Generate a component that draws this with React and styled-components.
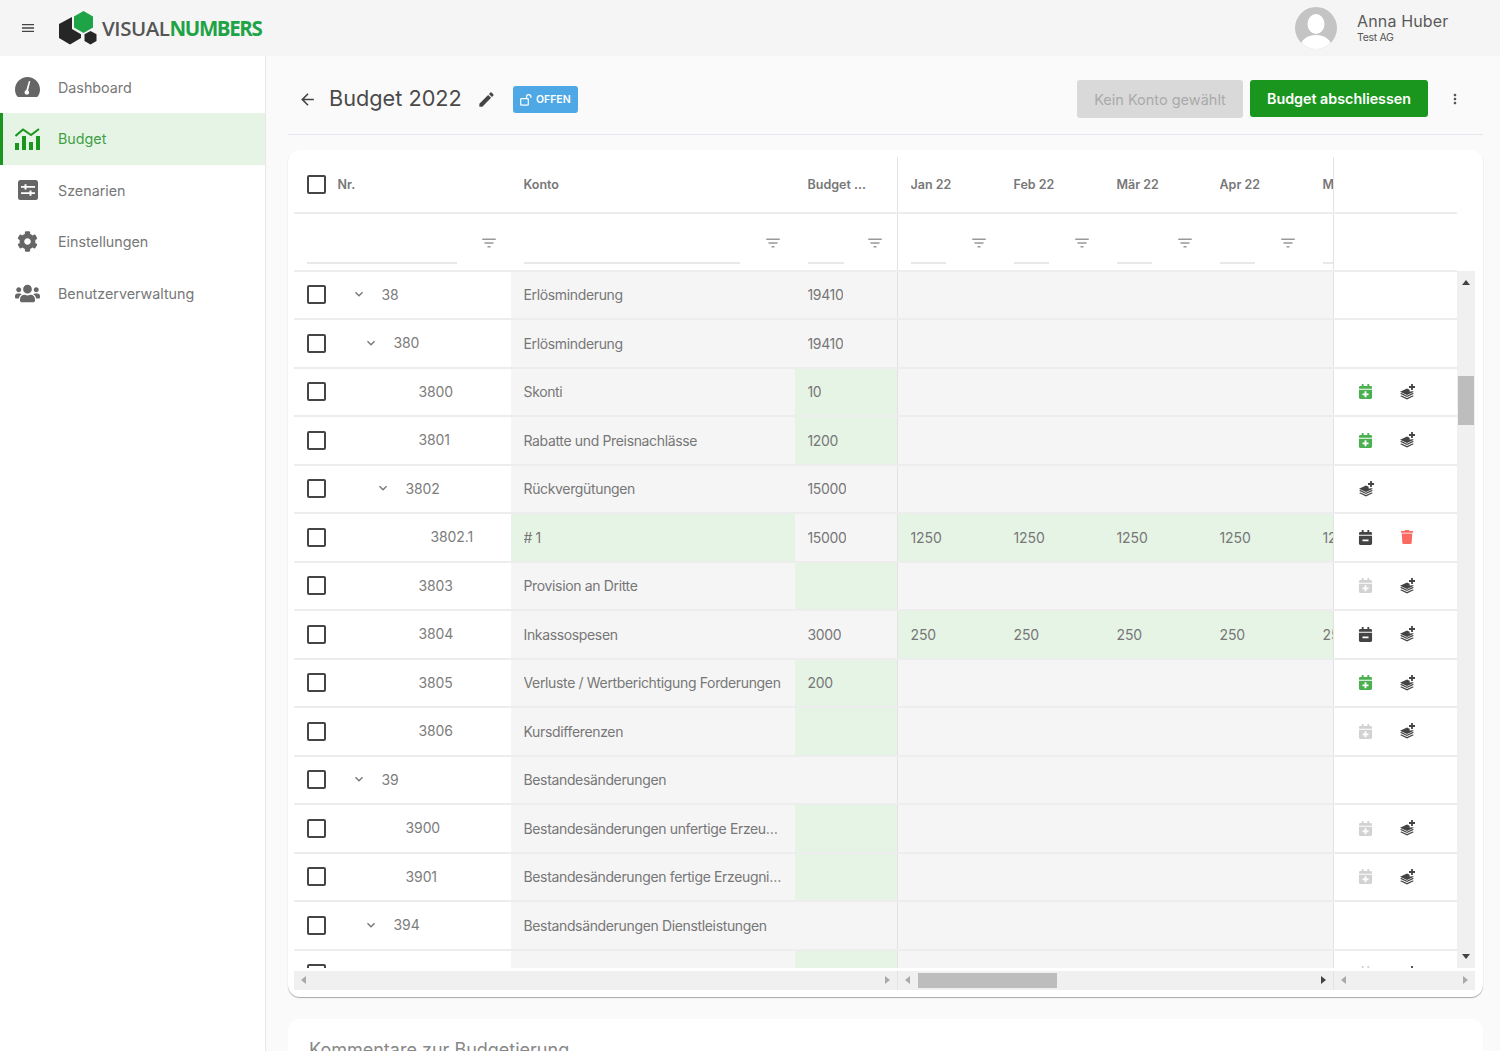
import React from "react";
import styled, { createGlobalStyle } from "styled-components";
import {
  MdMenu,
  MdArrowBack,
  MdEdit,
  MdMoreVert,
  MdFilterList,
  MdExpandMore,
} from "react-icons/md";
import {
  FaCog,
  FaUsers,
  FaCalendarPlus,
  FaCalendarMinus,
  FaTrash,
} from "react-icons/fa";

const GlobalStyle = createGlobalStyle`
  html, body {
    margin: 0;
    height: 100%;
    overflow: hidden;
    background: #fafafa;
    font-family: Inter, "Liberation Sans", sans-serif;
  }
  * { box-sizing: border-box; }
`;

const Page = styled.div`
  height: 1051px;
  overflow: hidden;
  display: flex;
  flex-direction: column;
`;

const TopBar = styled.header`
  height: 56px;
  flex: none;
  background: #f5f5f5;
  display: flex;
  align-items: center;
  padding-left: 20px;
  color: #444;
`;

const Logo = styled.div`
  display: flex;
  align-items: center;
  margin-left: 22px;
  margin-top: -1px;
  gap: 5px;
`;

const LogoText = styled.span`
  font-family: "Open Sans", sans-serif;
  font-weight: 600;
  font-size: 20.5px;
  letter-spacing: -0.45px;
  color: #555;
  b {
    color: #1fa347;
    font-weight: 700;
    letter-spacing: -1.4px;
  }
`;

const User = styled.div`
  margin-left: auto;
  width: 205px;
  display: flex;
  align-items: center;
  gap: 20px;
`;

const UserName = styled.div`
  font-size: 16px;
  letter-spacing: 0.15px;
  color: #5a5a5a;
  line-height: 20px;
  margin-top: -2px;
`;

const UserCompany = styled.div`
  font-size: 10.5px;
  color: #555;
  line-height: 13px;
  letter-spacing: -0.3px;
`;

const Content = styled.div`
  flex: 1;
  display: flex;
  min-height: 0;
`;

const Sidebar = styled.nav`
  width: 266px;
  flex: none;
  background: #fff;
  border-right: 1px solid #e8e8e8;
  padding-top: 5.5px;
`;

const NavItem = styled.div`
  height: 51.5px;
  display: flex;
  align-items: center;
  gap: 18px;
  padding-left: ${(p) => (p.$active ? "12px" : "15px")};
  font-size: 14.3px;
  color: ${(p) => (p.$active ? "#3f9f45" : "#777")};
  background: ${(p) => (p.$active ? "#e6f4e6" : "transparent")};
  border-left: ${(p) => (p.$active ? "3px solid #1a961e" : "none")};
`;

const NavIcon = styled.span`
  width: 25px;
  height: 24px;
  display: flex;
  align-items: center;
  justify-content: center;
  color: ${(p) => (p.$active ? "#1a961e" : "#666")};
`;

const Main = styled.main`
  flex: 1;
  min-width: 0;
  padding: 24px 17px 0 22px;
`;

const TitleRow = styled.div`
  height: 55px;
  display: flex;
  align-items: flex-start;
  border-bottom: 1px solid #e3e9ee;
  color: #444;
`;

const BackButton = styled.span`
  width: 39px;
  height: 38px;
  margin-right: 2px;
  display: flex;
  align-items: center;
  justify-content: center;
`;

const Title = styled.h1`
  margin: 0;
  font-size: 21.7px;
  font-weight: 400;
  line-height: 36px;
  color: #4a4a4a;
`;

const EditButton = styled.span`
  width: 50px;
  height: 38px;
  display: flex;
  align-items: center;
  justify-content: center;
`;

const Badge = styled.span`
  height: 27px;
  width: 65px;
  margin: 6px 0 0 1px;
  background: #4ea8e6;
  color: #fff;
  border-radius: 3px;
  font-size: 10.5px;
  font-weight: 600;
  display: flex;
  align-items: center;
  justify-content: center;
  gap: 3px;
`;

const Actions = styled.div`
  margin-left: auto;
  display: flex;
  gap: 7px;
  align-items: flex-start;
`;

const DisabledButton = styled.span`
  width: 166px;
  height: 38px;
  background: #d9d9d9;
  color: #aaa;
  border-radius: 3px;
  font-size: 14.5px;
  display: flex;
  align-items: center;
  justify-content: center;
`;

const PrimaryButton = styled.span`
  width: 178px;
  height: 37px;
  background: #1a961e;
  color: #fff;
  border-radius: 3px;
  font-size: 14.3px;
  font-weight: 600;
  display: flex;
  align-items: center;
  justify-content: center;
`;

const MoreButton = styled.span`
  width: 54px;
  height: 38px;
  margin-right: 1px;
  margin-left: -7px;
  display: flex;
  align-items: center;
  justify-content: center;
  color: #555;
`;

const Card = styled.section`
  margin-top: 15px;
  background: #fff;
  border-radius: 12px;
  padding: 7px 8px 7px 6px;
  box-shadow: 0 1px 1px #a8a8a8;
`;

const GridRow = styled.div`
  display: grid;
  grid-template-columns: 217px 284px 102px 436px 124px;
  width: 1163px;
  height: ${(p) => p.$height}px;
  border-bottom: 2px solid #ededed;
`;

const HeadCell = styled.div`
  display: flex;
  align-items: center;
  min-width: 0;
  padding-left: 12.5px;
  padding-right: ${(p) => p.$pr || 0}px;
  font-size: 12.5px;
  font-weight: 600;
  color: #777;
  gap: 12px;
`;

const HeadText = styled.span`
  overflow: hidden;
  white-space: nowrap;
  text-overflow: ellipsis;
`;

const Pane = styled.div`
  display: flex;
  min-width: 0;
  overflow: hidden;
  border-left: 1px solid #e2e2e2;
  background: ${(p) => p.$bg || "transparent"};
`;

const EndPane = styled.div`
  display: flex;
  align-items: center;
  min-width: 0;
  border-left: 1px solid #e2e2e2;
  padding-left: 11px;
  background: #fff;
`;

const MonthHead = styled(HeadCell)`
  width: 103px;
  flex: none;
`;

const FilterCell = styled.div`
  display: flex;
  justify-content: space-between;
  align-items: flex-start;
  padding: 0 13px 0 12.5px;
  width: ${(p) => (p.$fixed ? "103px" : "auto")};
  flex: none;
  min-width: 0;
`;

const FilterInput = styled.span`
  display: block;
  width: ${(p) => p.$w}px;
  height: 50px;
  border-bottom: 2px solid #e8e8e8;
`;

const FilterIcon = styled.span`
  display: flex;
  margin-top: 20px;
  color: #999;
`;

const BodyWrap = styled.div`
  display: flex;
  height: 696.5px;
`;

const Rows = styled.div`
  width: 1163px;
  overflow: hidden;
  flex: none;
`;

const DataRow = styled.div`
  display: grid;
  grid-template-columns: 217px 284px 102px 436px 124px;
  height: 48.5px;
  border-bottom: 2px solid #ededed;
`;

const NrCell = styled.div`
  display: flex;
  align-items: center;
  padding-left: 12.5px;
  background: #fff;
`;

const Checkbox = styled.span`
  width: 19px;
  height: 19px;
  flex: none;
  border: 2px solid #454545;
  border-radius: 2px;
  background: #fff;
`;

const NrValue = styled.span`
  display: flex;
  align-items: center;
  padding-left: ${(p) => p.$offset}px;
  font-size: 14px;
  color: #7d7d7d;
  margin-top: -1px;
  letter-spacing: -0.1px;
`;

const Chevron = styled.span`
  display: flex;
  width: 16px;
  margin-right: 15px;
  color: #777;
`;

const TextCell = styled.div`
  padding: 0 12px 0 12.5px;
  display: flex;
  align-items: center;
  min-width: 0;
  font-size: 14px;
  color: #777;
  background: ${(p) => (p.$green ? "#e6f4e6" : "#f5f5f5")};
`;

const Ellipsis = styled.span`
  overflow: hidden;
  white-space: nowrap;
  text-overflow: ellipsis;
  letter-spacing: -0.35px;
`;

const MonthCell = styled.div`
  width: 103px;
  flex: none;
  padding-left: 12.5px;
  display: flex;
  align-items: center;
  font-size: 14px;
  color: #777;
  letter-spacing: -0.1px;
  background: ${(p) => (p.$green ? "#e6f4e6" : "#f5f5f5")};
`;

const ActionSlot = styled.span`
  width: 41px;
  display: flex;
  justify-content: center;
  color: ${(p) => p.$color || "#444"};
`;

const VTrack = styled.div`
  width: 18px;
  margin-top: -1px;
  background: #f0f0f0;
  display: flex;
  flex-direction: column;
  align-items: center;
  padding: 9px 0;
`;

const VThumb = styled.span`
  width: 16px;
  height: 49px;
  background: #bdbdbd;
  margin-top: 91px;
  margin-bottom: auto;
`;

const Triangle = styled.span`
  width: 0;
  height: 0;
  flex: none;
  border-style: solid;
  ${(p) =>
    p.$dir === "up" && `border-width: 0 4.5px 5px; border-color: transparent transparent ${p.$color} transparent;`}
  ${(p) =>
    p.$dir === "down" && `border-width: 5px 4.5px 0; border-color: ${p.$color} transparent transparent transparent;`}
  ${(p) =>
    p.$dir === "left" && `border-width: 4.5px 5px 4.5px 0; border-color: transparent ${p.$color} transparent transparent;`}
  ${(p) =>
    p.$dir === "right" && `border-width: 4.5px 0 4.5px 5px; border-color: transparent transparent transparent ${p.$color};`}
`;

const HScroll = styled.div`
  margin-top: 2.5px;
  height: 19px;
  display: grid;
  grid-template-columns: 603px 436px 142px;
  background: #f0f0f0;
`;

const HPane = styled.div`
  display: flex;
  align-items: center;
  justify-content: space-between;
  padding: 0 7px;
  border-left: ${(p) => (p.$first ? "none" : "1px solid #e2e2e2")};
`;

const HThumb = styled.span`
  width: 139px;
  height: 15px;
  background: #bdbdbd;
  margin-left: 8px;
  margin-right: auto;
`;

const CommentCard = styled.section`
  margin-top: 22px;
  background: #fff;
  border-radius: 12px 12px 0 0;
  height: 120px;
  padding: 20px 21px;
  font-size: 18px;
  color: #888;
`;

const months = ["Jan 22", "Feb 22", "Mär 22", "Apr 22", "Mai 22"];

const DashboardIcon = () => (
  <svg width="25" height="20" viewBox="0 0 25 20" fill="currentColor">
    <path d="M12.5 0C5.6 0 0 5.6 0 12.5c0 2.4.7 4.8 1.9 6.5.4.6.9 1 1.6 1h18c.7 0 1.2-.4 1.6-1 1.2-1.7 1.9-4.1 1.9-6.5C25 5.6 19.4 0 12.5 0z" />
    <path d="M15.3 4.2l-2.2 9.2a2.3 2.3 0 1 1-1.8-.3l2.6-9.2z" fill="#fff" />
  </svg>
);

const BudgetIcon = () => (
  <svg width="25" height="22" viewBox="0 0 25 22" fill="currentColor">
    <rect x="0" y="15" width="4" height="7" />
    <rect x="7" y="8" width="4" height="14" />
    <rect x="14" y="14" width="4" height="8" />
    <rect x="21" y="8" width="4" height="14" />
    <path d="M0.5 8L8 1.5l8 5.5 8-6" fill="none" stroke="currentColor" strokeWidth="2" />
  </svg>
);

const ScenarioIcon = () => (
  <svg width="20" height="20" viewBox="0 0 20 20" fill="currentColor">
    <rect width="20" height="20" rx="2.5" />
    <path d="M3 6h3.5V4.2h2V6H17v1.8H8.5v1.8h-2V7.8H3zM3 12.2h8.5v-1.8h2v1.8H17V14h-3.5v1.8h-2V14H3z" fill="#fff" />
  </svg>
);

const LayersPlus = () => (
  <svg width="16" height="16" viewBox="0 0 16 16" fill="currentColor">
    <path d="M12.1 0h1.8v2.1H16v1.8h-2.1V6h-1.8V3.9H10V2.1h2.1z" />
    <path d="M8 4.6l2.6 1.2v1.6h2V7l2.4.8L8 11 1 7.8z" />
    <path d="M2.5 9.1L8 11.7l5.5-2.6 1.5.7L8 13.1 1 9.8z" />
    <path d="M2.5 11.4L8 14l5.5-2.6 1.5.7L8 15.4 1 12.1z" />
  </svg>
);

const LockOpen = () => (
  <svg width="13" height="12" viewBox="0 0 13 12" fill="none" stroke="currentColor" strokeWidth="1.2">
    <rect x="0.7" y="4.6" width="7.6" height="6.6" rx="0.8" />
    <path d="M6.5 4.6V2.8a2.2 2.2 0 0 1 4.4 0V4" />
  </svg>
);

const Hexagons = () => (
  <svg width="39" height="34" viewBox="0 0 39 34">
    <path d="M25.5 0L35 5.5v11L25.5 22 16 16.5v-11z" fill="#1fa347" />
    <path d="M1 13l13-7v12l9 5.2V27l-11 6.5L1 27z" fill="#262626" />
    <path d="M32.5 20l6 3.3v6.6l-6 3.5-6-3.5v-6.6z" fill="#262626" />
  </svg>
);

const Avatar = () => (
  <svg width="42" height="42" viewBox="0 0 42 42">
    <defs>
      <clipPath id="avatar-clip">
        <circle cx="21" cy="21" r="21" />
      </clipPath>
    </defs>
    <g clipPath="url(#avatar-clip)">
      <rect width="42" height="42" fill="#c4c4c4" />
      <ellipse cx="21" cy="17" rx="8.5" ry="10" fill="#fff" />
      <path d="M5 42c0-9 7-14 16-14s16 5 16 14z" fill="#fff" />
    </g>
  </svg>
);

const FilterGlyph = () => (
  <FilterIcon>
    <MdFilterList size={18} />
  </FilterIcon>
);

const calendar = {
  add: <ActionSlot $color="#4caf50"><FaCalendarPlus size={15} /></ActionSlot>,
  off: <ActionSlot $color="#d2d2d2"><FaCalendarPlus size={15} /></ActionSlot>,
  set: <ActionSlot><FaCalendarMinus size={15} /></ActionSlot>,
};
const layers = <ActionSlot><LayersPlus /></ActionSlot>;
const trash = <ActionSlot $color="#fa6a63"><FaTrash size={14} /></ActionSlot>;

const rows = [
  { nr: "38", offset: 56, chevron: true, name: "Erlösminderung", budget: "19410" },
  { nr: "380", offset: 68, chevron: true, name: "Erlösminderung", budget: "19410" },
  { nr: "3800", offset: 93, name: "Skonti", budget: "10", edit: true, actions: [calendar.add, layers] },
  { nr: "3801", offset: 93, name: "Rabatte und Preisnachlässe", budget: "1200", edit: true, actions: [calendar.add, layers] },
  { nr: "3802", offset: 80, chevron: true, name: "Rückvergütungen", budget: "15000", actions: [layers] },
  { nr: "3802.1", offset: 105, name: "# 1", nameGreen: true, budget: "15000", monthly: "1250", actions: [calendar.set, trash] },
  { nr: "3803", offset: 93, name: "Provision an Dritte", edit: true, actions: [calendar.off, layers] },
  { nr: "3804", offset: 93, name: "Inkassospesen", budget: "3000", monthly: "250", actions: [calendar.set, layers] },
  { nr: "3805", offset: 93, name: "Verluste / Wertberichtigung Forderungen", budget: "200", edit: true, actions: [calendar.add, layers] },
  { nr: "3806", offset: 93, name: "Kursdifferenzen", edit: true, actions: [calendar.off, layers] },
  { nr: "39", offset: 56, chevron: true, name: "Bestandesänderungen" },
  { nr: "3900", offset: 80, name: "Bestandesänderungen unfertige Erzeugnisse", edit: true, actions: [calendar.off, layers] },
  { nr: "3901", offset: 80, name: "Bestandesänderungen fertige Erzeugnisse", edit: true, actions: [calendar.off, layers] },
  { nr: "394", offset: 68, chevron: true, name: "Bestandsänderungen Dienstleistungen" },
  { nr: "3940", offset: 93, name: "Bestandsänderungen nicht fakturiert", edit: true, actions: [calendar.off, layers] },
];

const nav = [
  { label: "Dashboard", icon: <DashboardIcon /> },
  { label: "Budget", icon: <BudgetIcon />, active: true },
  { label: "Szenarien", icon: <ScenarioIcon /> },
  { label: "Einstellungen", icon: <FaCog size={21} /> },
  { label: "Benutzerverwaltung", icon: <FaUsers size={25} /> },
];

export default function App() {
  return (
    <Page>
      <GlobalStyle />
      <TopBar>
        <MdMenu size={16} />
        <Logo>
          <Hexagons />
          <LogoText>
            VISUAL<b>NUMBERS</b>
          </LogoText>
        </Logo>
        <User>
          <Avatar />
          <div>
            <UserName>Anna Huber</UserName>
            <UserCompany>Test AG</UserCompany>
          </div>
        </User>
      </TopBar>
      <Content>
        <Sidebar>
          {nav.map((item) => (
            <NavItem key={item.label} $active={item.active}>
              <NavIcon $active={item.active}>{item.icon}</NavIcon>
              {item.label}
            </NavItem>
          ))}
        </Sidebar>
        <Main>
          <TitleRow>
            <BackButton>
              <MdArrowBack size={19} />
            </BackButton>
            <Title>Budget 2022</Title>
            <EditButton>
              <MdEdit size={19} />
            </EditButton>
            <Badge>
              <LockOpen />
              OFFEN
            </Badge>
            <Actions>
              <DisabledButton>Kein Konto gewählt</DisabledButton>
              <PrimaryButton>Budget abschliessen</PrimaryButton>
              <MoreButton>
                <MdMoreVert size={16} />
              </MoreButton>
            </Actions>
          </TitleRow>

          <Card>
            <GridRow $height={57}>
              <HeadCell>
                <Checkbox />
                <HeadText>Nr.</HeadText>
              </HeadCell>
              <HeadCell>
                <HeadText>Konto</HeadText>
              </HeadCell>
              <HeadCell $pr={30}>
                <HeadText>Budget 2022</HeadText>
              </HeadCell>
              <Pane>
                {months.map((m) => (
                  <MonthHead key={m}>
                    <HeadText>{m}</HeadText>
                  </MonthHead>
                ))}
              </Pane>
              <EndPane />
            </GridRow>
            <GridRow $height={57.5}>
              <FilterCell>
                <FilterInput $w={150} />
                <FilterGlyph />
              </FilterCell>
              <FilterCell>
                <FilterInput $w={216} />
                <FilterGlyph />
              </FilterCell>
              <FilterCell>
                <FilterInput $w={36} />
                <FilterGlyph />
              </FilterCell>
              <Pane>
                {months.map((m) => (
                  <FilterCell key={m} $fixed>
                    <FilterInput $w={35} />
                    <FilterGlyph />
                  </FilterCell>
                ))}
              </Pane>
              <EndPane />
            </GridRow>

            <BodyWrap>
              <Rows>
                {rows.map((row) => (
                  <DataRow key={row.nr}>
                    <NrCell>
                      <Checkbox />
                      <NrValue $offset={row.chevron ? row.offset - 31 : row.offset}>
                        {row.chevron && (
                          <Chevron>
                            <MdExpandMore size={16} />
                          </Chevron>
                        )}
                        {row.nr}
                      </NrValue>
                    </NrCell>
                    <TextCell $green={row.nameGreen}>
                      <Ellipsis>{row.name}</Ellipsis>
                    </TextCell>
                    <TextCell $green={row.edit}>
                      <Ellipsis>{row.budget}</Ellipsis>
                    </TextCell>
                    <Pane $bg="#f5f5f5">
                      {row.monthly &&
                        months.map((m) => (
                          <MonthCell key={m} $green>
                            {row.monthly}
                          </MonthCell>
                        ))}
                    </Pane>
                    <EndPane>
                      {row.actions &&
                        row.actions.map((action, i) => (
                          <React.Fragment key={i}>{action}</React.Fragment>
                        ))}
                    </EndPane>
                  </DataRow>
                ))}
              </Rows>
              <VTrack>
                <Triangle $dir="up" $color="#444" />
                <VThumb />
                <Triangle $dir="down" $color="#444" />
              </VTrack>
            </BodyWrap>

            <HScroll>
              <HPane $first>
                <Triangle $dir="left" $color="#aaa" />
                <Triangle $dir="right" $color="#aaa" />
              </HPane>
              <HPane>
                <Triangle $dir="left" $color="#aaa" />
                <HThumb />
                <Triangle $dir="right" $color="#444" />
              </HPane>
              <HPane>
                <Triangle $dir="left" $color="#aaa" />
                <Triangle $dir="right" $color="#aaa" />
              </HPane>
            </HScroll>
          </Card>

          <CommentCard>Kommentare zur Budgetierung</CommentCard>
        </Main>
      </Content>
    </Page>
  );
}
